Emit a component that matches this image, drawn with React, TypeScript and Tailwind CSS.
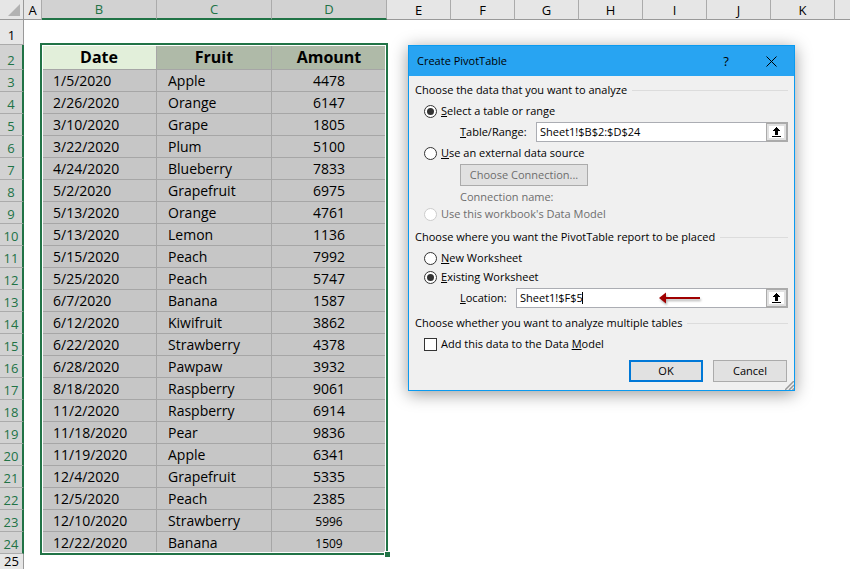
import { type ReactNode } from 'react'
import { clsx } from 'clsx'

type Row = { date: string; fruit: string; amount: number; small?: boolean }

const rows: Row[] = [
	{ date: '1/5/2020', fruit: 'Apple', amount: 4478 },
	{ date: '2/26/2020', fruit: 'Orange', amount: 6147 },
	{ date: '3/10/2020', fruit: 'Grape', amount: 1805 },
	{ date: '3/22/2020', fruit: 'Plum', amount: 5100 },
	{ date: '4/24/2020', fruit: 'Blueberry', amount: 7833 },
	{ date: '5/2/2020', fruit: 'Grapefruit', amount: 6975 },
	{ date: '5/13/2020', fruit: 'Orange', amount: 4761 },
	{ date: '5/13/2020', fruit: 'Lemon', amount: 1136 },
	{ date: '5/15/2020', fruit: 'Peach', amount: 7992 },
	{ date: '5/25/2020', fruit: 'Peach', amount: 5747 },
	{ date: '6/7/2020', fruit: 'Banana', amount: 1587 },
	{ date: '6/12/2020', fruit: 'Kiwifruit', amount: 3862 },
	{ date: '6/22/2020', fruit: 'Strawberry', amount: 4378 },
	{ date: '6/28/2020', fruit: 'Pawpaw', amount: 3932 },
	{ date: '8/18/2020', fruit: 'Raspberry', amount: 9061 },
	{ date: '11/2/2020', fruit: 'Raspberry', amount: 6914 },
	{ date: '11/18/2020', fruit: 'Pear', amount: 9836 },
	{ date: '11/19/2020', fruit: 'Apple', amount: 6341 },
	{ date: '12/4/2020', fruit: 'Grapefruit', amount: 5335 },
	{ date: '12/5/2020', fruit: 'Peach', amount: 2385 },
	{ date: '12/10/2020', fruit: 'Strawberry', amount: 5996, small: true },
	{ date: '12/22/2020', fruit: 'Banana', amount: 1509, small: true },
]

const columns = ['A', 'B', 'C', 'D', 'E', 'F', 'G', 'H', 'I', 'J', 'K']
const selected = ['B', 'C', 'D']

const RowHead = ({ n, active, last }: { n: number; active?: boolean; last?: boolean }) => (
	<th
		scope="row"
		className={clsx(
			'p-0 align-bottom text-[13px] font-normal',
			last ? 'leading-[15px]' : 'border-b border-b-[#ababab] leading-[17px]',
			active
				? 'border-r-2 border-r-[#217346] bg-[#d2d2d2] text-[#217346]'
				: 'border-r border-r-[#999999] bg-[#e6e6e6] text-black'
		)}
	>
		{n}
	</th>
)

const Sheet = () => (
	<div className="relative">
		<table className="w-full table-fixed border-separate border-spacing-0">
			<colgroup>
				<col className="w-6" />
				<col className="w-[18px]" />
				<col className="w-[115px]" />
				<col className="w-[115px]" />
				<col className="w-[115px]" />
				<col className="w-16" />
				<col className="w-16" />
				<col className="w-16" />
				<col className="w-16" />
				<col className="w-16" />
				<col className="w-16" />
				<col className="w-16" />
				<col />
			</colgroup>
			<thead>
				<tr className="h-5">
					<td className="border-r border-b border-[#999999] bg-[#e6e6e6] p-0">
						<svg viewBox="0 0 12 12" className="ml-2 size-3" aria-hidden="true">
							<path d="M12 0v12H0z" fill="#b2b2b2" />
						</svg>
					</td>
					{columns.map(name => (
						<th
							key={name}
							scope="col"
							className={clsx(
								'border-r border-r-[#ababab] p-0 text-center text-[13px] leading-[18px] font-normal',
								selected.includes(name)
									? 'border-b-2 border-b-[#217346] bg-[#d2d2d2] text-[#217346]'
									: 'border-b border-b-[#999999] bg-[#e6e6e6] text-black'
							)}
						>
							{name}
						</th>
					))}
					<td className="border-b border-[#999999] bg-[#e6e6e6] p-0" />
				</tr>
			</thead>
			<tbody>
				<tr className="h-[25px]">
					<RowHead n={1} />
				</tr>
				<tr className="h-[25px] text-base leading-6 font-bold">
					<RowHead n={2} active />
					<td className="p-0" />
					<td className="border-r border-b border-[#a6a6a6] bg-[#e2efda] p-0 text-center">
						Date
					</td>
					<td className="border-r border-b border-[#a6a6a6] bg-[#afbaa8] p-0 text-center">
						Fruit
					</td>
					<td className="border-r border-b border-[#a6a6a6] bg-[#afbaa8] p-0 text-center">
						Amount
					</td>
				</tr>
				{rows.map((row, i) => (
					<tr key={i} className="h-[22px] bg-white text-sm leading-5">
						<RowHead n={i + 3} active />
						<td className="p-0" />
						<td className="border-r border-b border-[#a6a6a6] bg-[#c6c6c6] p-0 pl-[11px]">
							{row.date}
						</td>
						<td className="border-r border-b border-[#a6a6a6] bg-[#c6c6c6] p-0 pl-[11px]">
							{row.fruit}
						</td>
						<td
							className={clsx(
								'border-r border-b border-[#a6a6a6] bg-[#c6c6c6] p-0 text-center',
								row.small && 'align-bottom text-xs leading-[18px]'
							)}
						>
							{row.amount}
						</td>
					</tr>
				))}
				<tr>
					<RowHead n={25} last />
				</tr>
			</tbody>
		</table>
		{/* selection frame with its fill handle */}
		<div className="absolute top-[43px] left-10 h-[512px] w-[348px] border-2 border-[#217346]">
			<div className="size-full border border-white" />
			<div className="absolute -right-[4px] -bottom-[4px] size-[6px] border-t border-l border-white bg-[#217346]" />
		</div>
	</div>
)

const Heading = ({ children }: { children: ReactNode }) => (
	<div className="flex h-5 items-center gap-[5px]">
		<h3>{children}</h3>
		<div className="h-px flex-1 bg-[#dcdcdc]" />
	</div>
)

const Radio = ({
	id,
	name,
	checked,
	disabled,
	className,
	children,
}: {
	id: string
	name: string
	checked?: boolean
	disabled?: boolean
	className: string
	children: ReactNode
}) => (
	<div className={clsx('flex items-center gap-1 pl-[9px]', className)}>
		<input
			id={id}
			name={name}
			type="radio"
			defaultChecked={checked}
			disabled={disabled}
			className="grid size-[13px] shrink-0 appearance-none place-content-center rounded-full border border-[#333333] bg-white before:size-[7px] before:rounded-full checked:before:bg-[#333333] disabled:border-[#cccccc]"
		/>
		<label htmlFor={id} className={clsx(disabled && 'text-[#6d6d6d]')}>
			{children}
		</label>
	</div>
)

const RangeField = ({
	id,
	value,
	children,
}: {
	id: string
	value: string
	children?: ReactNode
}) => (
	<div className="relative flex h-5 flex-1 border border-[#abadb3] bg-white">
		<input
			id={id}
			type="text"
			defaultValue={value}
			className="min-w-0 flex-1 px-[3px] outline-none"
		/>
		<button
			type="button"
			aria-label="Collapse dialog"
			className="-my-px -mr-px flex w-[22px] items-center justify-center border-2 border-l border-[#ababab] bg-white ring-2 ring-[#e1e1e1] ring-inset"
		>
			<svg viewBox="0 0 9 10" className="h-2.5 w-[9px]" shapeRendering="crispEdges">
				<path d="M4 0h1v1h1v1h1v1h1v1H6v4H3V4H1V3h1V2h1V1h1zM0 9h9v1H0z" />
			</svg>
		</button>
		{children}
	</div>
)

const PivotDialog = () => (
	<form
		role="dialog"
		aria-labelledby="dialog-title"
		className="absolute top-[45px] left-[408px] w-[387px] border border-[#0a9af0] bg-[#f0f0f0] text-[11px] leading-4 shadow-[0_3px_16px_rgba(0,0,0,0.4)]"
	>
		<div className="flex h-[30px] items-center bg-[#28a4f2] pl-2">
			<h2 id="dialog-title" className="flex-1">
				Create PivotTable
			</h2>
			<button type="button" aria-label="Help" className="h-full w-11 text-[13px]">
				?
			</button>
			<button
				type="button"
				aria-label="Close"
				className="flex h-full w-[46px] items-center justify-center"
			>
				<svg viewBox="0 0 11 11" className="size-[11px]">
					<path d="M.5.5l10 10M10.500.5l-10 10" stroke="black" fill="none" />
				</svg>
			</button>
		</div>
		<div className="pt-1 pr-1.5 pb-2 pl-1.5">
			<Heading>Choose the data that you want to analyze</Heading>
			<Radio id="range" name="source" checked className="h-[22px]">
				<u>S</u>elect a table or range
			</Radio>
			<div className="flex items-center pl-[45px]">
				<label htmlFor="table-range" className="w-[76px]">
					<u>T</u>able/Range:
				</label>
				<RangeField id="table-range" value="Sheet1!$B$2:$D$24" />
			</div>
			<Radio id="external" name="source" className="h-[22px]">
				<u>U</u>se an external data source
			</Radio>
			<div className="pl-[45px] text-[#6d6d6d]">
				<button
					type="button"
					disabled
					className="block h-[22px] w-32 border border-[#ababab] bg-[#e1e1e1]"
				>
					Choose Connection...
				</button>
				<p className="pt-[3px]">Connection name:</p>
			</div>
			<Radio id="model" name="source" disabled className="mt-px h-4">
				Use this workbook's Data Model
			</Radio>
			<div className="pt-[5px]">
				<Heading>Choose where you want the PivotTable report to be placed</Heading>
			</div>
			<Radio id="new" name="target" className="h-[22px]">
				<u>N</u>ew Worksheet
			</Radio>
			<Radio id="existing" name="target" checked className="h-4">
				<u>E</u>xisting Worksheet
			</Radio>
			<div className="flex items-center pt-[3px] pl-[45px]">
				<label htmlFor="location" className="w-14">
					<u>L</u>ocation:
				</label>
				<RangeField id="location" value="Sheet1!$F$5">
					<span className="absolute top-[3px] left-[65px] h-3 w-px bg-black" />
					<svg
						viewBox="0 0 44 16"
						className="absolute top-px right-[85px] h-4 w-11 drop-shadow-[1px_2px_1px_rgba(0,0,0,0.3)]"
						aria-hidden="true"
					>
						<path d="M1 8l7-5.500v11z" fill="#a00000" />
						<path d="M6 8h36" stroke="#a00000" strokeWidth="2" />
					</svg>
				</RangeField>
			</div>
			<div className="pt-[5px]">
				<Heading>Choose whether you want to analyze multiple tables</Heading>
			</div>
			<div className="flex h-[22px] items-center gap-1 pl-[9px]">
				<input
					id="add-model"
					type="checkbox"
					className="size-[13px] shrink-0 appearance-none border border-[#333333] bg-white"
				/>
				<label htmlFor="add-model">
					Add this data to the Data <u>M</u>odel
				</label>
			</div>
			<div className="flex justify-end gap-2.5 pt-[5px] pr-px">
				<button
					type="submit"
					className="h-[22px] w-[74px] border-2 border-[#0078d7] bg-[#e1e1e1]"
				>
					OK
				</button>
				<button
					type="button"
					className="h-[22px] w-[74px] border border-[#ababab] bg-[#e1e1e1]"
				>
					Cancel
				</button>
			</div>
		</div>
		<svg viewBox="0 0 9 9" className="absolute right-0 bottom-0 size-[9px]" aria-hidden="true">
			<path d="M0 9l9-9M4 9l5-5M7.500 9L9 7.500" stroke="#999999" strokeWidth="1.500" />
		</svg>
	</form>
)

export default function App() {
	return (
		<main className="relative h-screen overflow-hidden bg-white font-['Open_Sans','Noto_Sans',sans-serif] text-black">
			<Sheet />
			<PivotDialog />
		</main>
	)
}
